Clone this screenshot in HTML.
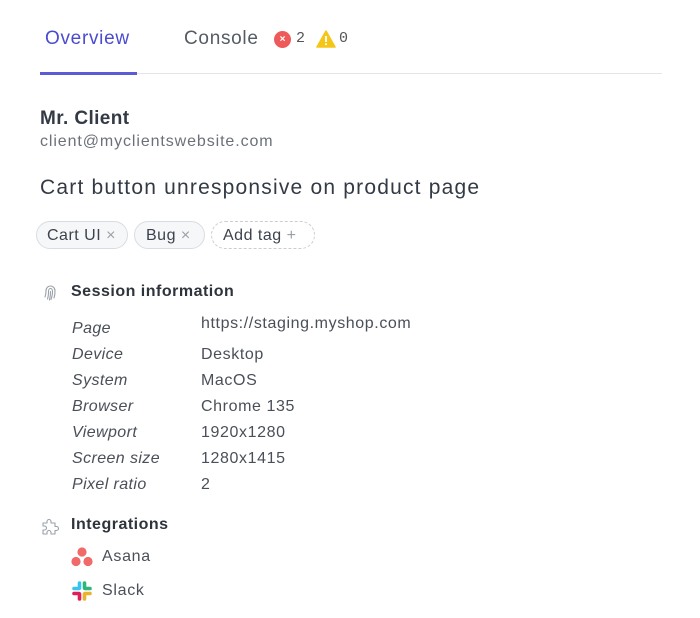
<!DOCTYPE html>
<html><head><meta charset="utf-8"><style>
body{margin:0;background:#fff;width:700px;height:618px;overflow:hidden;font-family:"Liberation Sans",sans-serif;color:#333a45;position:relative}
.a{position:absolute;white-space:nowrap}
.tab{font-size:19px;letter-spacing:0.7px}
.k{font-style:italic;font-size:16px;color:#4a4f58;letter-spacing:0.4px;left:72px}
.v{font-size:16px;color:#4a4f58;letter-spacing:0.6px;left:201px}
.tag{position:absolute;top:221px;height:28px;border:1px solid #d9dde2;border-radius:15px;background:#f6f7f9;font-size:16px;line-height:28px;color:#3d434d;box-sizing:border-box;letter-spacing:0.5px}
.x{color:#9aa0a8;font-size:16px}
</style></head><body>
<div class="a tab" style="left:45px;top:28px;color:#4a4bd0">Overview</div>
<div class="a tab" style="left:184px;top:28px;color:#555b64">Console</div>
<div class="a" style="left:274px;top:31px;width:17px;height:17px;border-radius:50%;background:#ee5a5a;color:#fff;font-size:10px;line-height:17px;text-align:center;font-weight:bold">×</div>
<div class="a" style="left:296px;top:30px;font-family:'Liberation Mono',monospace;font-size:15px;color:#555">2</div>
<svg class="a" style="left:316px;top:30px" width="20" height="18" viewBox="0 0 20 18"><path d="M10 1 L19 17 L1 17 Z" fill="#f5c518" stroke="#f5c518" stroke-linejoin="round" stroke-width="1.5"/><rect x="9.1" y="6" width="1.8" height="6" fill="#fff"/><rect x="9.1" y="13.3" width="1.8" height="1.8" fill="#fff"/></svg>
<div class="a" style="left:339px;top:30px;font-family:'Liberation Mono',monospace;font-size:15px;color:#555">0</div>
<div class="a" style="left:40px;top:73px;width:622px;height:1px;background:#e3e5e8"></div>
<div class="a" style="left:40px;top:72px;width:97px;height:3px;background:#5b5bd6"></div>
<div class="a" style="left:40px;top:108px;font-size:19px;font-weight:bold;color:#333a45;letter-spacing:0.4px">Mr. Client</div>
<div class="a" style="left:40px;top:133px;font-size:16px;color:#6b7079;letter-spacing:0.9px">client@myclientswebsite.com</div>
<div class="a" style="left:40px;top:176px;font-size:21px;color:#333a45;letter-spacing:1.2px">Cart button unresponsive on product page</div>
<div class="tag" style="left:36px;width:92px;padding-left:10px">Cart UI<span class="x"> ×</span></div>
<div class="tag" style="left:134px;width:71px;padding-left:11px">Bug<span class="x"> ×</span></div>
<div class="tag" style="left:211px;width:104px;padding-left:11px;border:1px dashed #c9cdd3;background:#fff">Add tag <span class="x">+</span></div>
<svg class="a" style="left:42px;top:284px" width="17" height="17" viewBox="0 0 17 17" fill="none" stroke="#9aa0a8" stroke-width="1.1" stroke-linecap="round"><path d="M3 13 C4 10 4 8 4 7 C4 4 6 2 8.5 2 C11 2 13 4 13 7 C13 9 13 11 12 14"/><path d="M5.5 15 C6.5 12 6.5 9 6.5 7.5 C6.5 6 7.3 4.5 8.5 4.5 C9.8 4.5 10.5 6 10.5 7.5 C10.5 10 10 12.5 9 15.5"/><path d="M7.5 16 C8.3 13 8.5 10 8.5 7.5"/></svg>
<div class="a" style="left:71px;top:283px;font-size:16px;font-weight:bold;color:#2f343c;letter-spacing:0.5px">Session information</div>
<div class="a k" style="top:320px">Page</div><div class="a v" style="top:315px">https://staging.myshop.com</div>
<div class="a k" style="top:346px">Device</div><div class="a v" style="top:346px">Desktop</div>
<div class="a k" style="top:372px">System</div><div class="a v" style="top:372px">MacOS</div>
<div class="a k" style="top:398px">Browser</div><div class="a v" style="top:398px">Chrome 135</div>
<div class="a k" style="top:424px">Viewport</div><div class="a v" style="top:424px">1920x1280</div>
<div class="a k" style="top:450px">Screen size</div><div class="a v" style="top:450px">1280x1415</div>
<div class="a k" style="top:476px">Pixel ratio</div><div class="a v" style="top:476px">2</div>
<svg class="a" style="left:41px;top:517px" width="19" height="19" viewBox="0 0 19 19" fill="none" stroke="#9aa0a8" stroke-width="1.1" stroke-linejoin="round"><path d="M2 6 H6 V4.5 A2 2 0 0 1 10 4.5 V6 H14 V9.5 H15.5 A2 2 0 0 1 15.5 13.5 H14 V17 H10 V15.5 A2 2 0 0 0 6 15.5 V17 H2 V13 H3.5 A2 2 0 0 0 3.5 9 H2 Z"/></svg>
<div class="a" style="left:71px;top:516px;font-size:16px;font-weight:bold;color:#2f343c;letter-spacing:0.5px">Integrations</div>
<svg class="a" style="left:71px;top:547px" width="22" height="20" viewBox="0 0 22 20"><circle cx="11" cy="5" r="4.6" fill="#f06a6a"/><circle cx="5" cy="14.5" r="4.6" fill="#f06a6a"/><circle cx="17" cy="14.5" r="4.6" fill="#f06a6a"/></svg>
<div class="a" style="left:102px;top:548px;font-size:16px;color:#4a4f58;letter-spacing:0.7px">Asana</div>
<svg class="a" style="left:71px;top:580px" width="22" height="22" viewBox="0 0 22 22" stroke-linecap="round" stroke-width="3.6"><path d="M8.5 3 V8" stroke="#36c5f0"/><path d="M3 8.5 H8" stroke="#36c5f0"/><path d="M19 8.5 H14" stroke="#2eb67d"/><path d="M13.5 3 V8" stroke="#2eb67d"/><path d="M13.5 19 V14" stroke="#ecb22e"/><path d="M19 13.5 H14" stroke="#ecb22e"/><path d="M3 13.5 H8" stroke="#e01e5a"/><path d="M8.5 19 V14" stroke="#e01e5a"/></svg>
<div class="a" style="left:102px;top:582px;font-size:16px;color:#4a4f58;letter-spacing:0.7px">Slack</div>
</body></html>
